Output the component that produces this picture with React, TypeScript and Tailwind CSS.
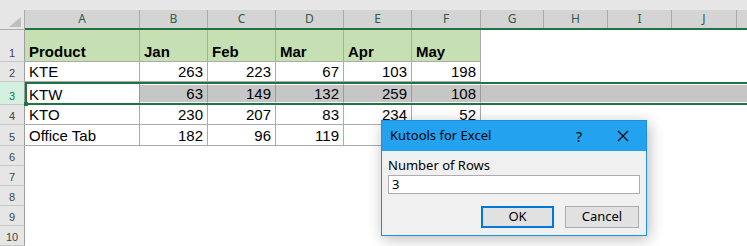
import React from "react";

const COLS = ["A", "B", "C", "D", "E", "F", "G", "H", "I", "J"];
const WCLS = [
  "w-[115px]",
  "w-[68px]",
  "w-[68px]",
  "w-[68px]",
  "w-[68px]",
  "w-[69px]",
  "w-[63px]",
  "w-[64px]",
  "w-[64px]",
  "w-[65px]",
];

type Cell = { t?: string; right?: boolean; bold?: boolean };

const DATA: Cell[][] = [
  [
    { t: "Product", bold: true },
    { t: "Jan", bold: true },
    { t: "Feb", bold: true },
    { t: "Mar", bold: true },
    { t: "Apr", bold: true },
    { t: "May", bold: true },
  ],
  [{ t: "KTE" }, { t: "263", right: true }, { t: "223", right: true }, { t: "67", right: true }, { t: "103", right: true }, { t: "198", right: true }],
  [{ t: "KTW" }, { t: "63", right: true }, { t: "149", right: true }, { t: "132", right: true }, { t: "259", right: true }, { t: "108", right: true }],
  [{ t: "KTO" }, { t: "230", right: true }, { t: "207", right: true }, { t: "83", right: true }, { t: "234", right: true }, { t: "52", right: true }],
  [{ t: "Office Tab" }, { t: "182", right: true }, { t: "96", right: true }, { t: "119", right: true }, {}, {}],
];

const ROW_H = ["h-[32px]", "h-[20px]", "h-[23px]", "h-[20px]", "h-[21px]", "h-[20px]", "h-[20px]", "h-[20px]", "h-[20px]", "h-[20px]"];

function RowHeader({ n, active, h }: { n: number; active?: boolean; h: string }) {
  return (
    <div
      className={`${h} w-[25px] shrink-0 flex items-end justify-center pb-[2px] border-r border-r-[#9E9E9E] border-b border-b-[#C8C8C8] text-[11px] leading-none ${
        active ? "bg-[#D3F0E0] text-[#217346]" : "bg-[#E6E6E6] text-[#444444]"
      }`}
    >
      {n}
    </div>
  );
}

function DataRow({ idx }: { idx: number }) {
  const row = DATA[idx];
  const h = ROW_H[idx];
  return (
    <div className="flex">
      <RowHeader n={idx + 1} h={h} />
      <div className="flex flex-1">
        {COLS.map((c, i) => {
          const cell = row ? row[i] : undefined;
          const inTable = row && i < 6;
          return (
            <div
              key={c}
              className={`${WCLS[i]} ${h} shrink-0 flex items-end pb-[2px] px-[4px] text-[15px] leading-none text-black whitespace-nowrap ${
                inTable ? "border-r border-b border-[#ABABAB]" : ""
              } ${idx === 0 && i < 6 ? "bg-[#C6E0B4]" : ""} ${cell?.right ? "justify-end" : "justify-start"} ${
                cell?.bold ? "font-bold" : ""
              }`}
            >
              {cell?.t}
            </div>
          );
        })}
        <div className={`flex-1 ${h}`} />
      </div>
    </div>
  );
}

function SelectedRow() {
  const row = DATA[2];
  return (
    <div className="flex">
      <RowHeader n={3} active h="h-[23px]" />
      <div className="relative flex flex-1 h-[23px] border-t-2 border-b-2 border-l-2 border-[#217346]">
        {COLS.map((c, i) => {
          const cell = row[i];
          const w = i === 0 ? "w-[113px]" : WCLS[i];
          return (
            <div
              key={c}
              className={`${w} h-full shrink-0 flex items-end pb-[1px] ${i === 0 ? "pl-[2px]" : "px-[4px]"} text-[15px] leading-none text-black whitespace-nowrap ${
                i === 0 ? "bg-white" : "bg-[#C6C6C6] border-y border-y-white"
              } ${i < 6 ? "border-r border-r-[#9A9A9A]" : ""} ${cell?.right ? "justify-end" : "justify-start"}`}
            >
              {cell?.t}
            </div>
          );
        })}
        <div className="flex-1 h-full bg-[#C6C6C6] border-y border-y-white" />
        <div className="absolute left-[-3px] bottom-[-3px] w-[4px] h-[4px] bg-[#217346]" />
      </div>
    </div>
  );
}

function Dialog() {
  return (
    <div className="absolute left-[381px] top-[120px] w-[266px] h-[116px] border border-[#1C8FDE] bg-[#F0F0F0] shadow-[2px_3px_14px_rgba(0,0,0,0.28)] flex flex-col font-['Noto_Sans',sans-serif] text-black">
      <div className="h-[30px] bg-[#22A2EF] flex items-center pl-[8px] pr-[17px] text-[13px]">
        <span className="flex-1">Kutools for Excel</span>
        <span className="text-[14px] mr-[35px]">?</span>
        <svg width="12" height="12" viewBox="0 0 12 12">
          <path d="M1 1 L11 11 M11 1 L1 11" stroke="#000" strokeWidth="1.1" fill="none" />
        </svg>
      </div>
      <div className="flex flex-col px-[6px] pt-[6px]">
        <div className="text-[13px] leading-[16px]">Number of Rows</div>
        <div className="mt-[2px] h-[19px] w-[252px] bg-white border border-[#ABADB3] flex items-center pl-[3px] text-[13px]">
          3
        </div>
        <div className="mt-[12px] flex justify-end gap-[11px] pr-[1px]">
          <button className="w-[73px] h-[22px] bg-[#E1E1E1] border-2 border-[#0078D7] text-[13px] flex items-center justify-center">
            OK
          </button>
          <button className="w-[74px] h-[22px] bg-[#E1E1E1] border border-[#ADADAD] text-[13px] flex items-center justify-center">
            Cancel
          </button>
        </div>
      </div>
    </div>
  );
}

export default function App() {
  return (
    <div className="relative w-[747px] h-[246px] overflow-hidden bg-white font-['Liberation_Sans',Arial,sans-serif]">
      <div className="h-[10px] bg-[#E6E6E6]" />
      <div className="flex h-[20px]">
        <div className="relative w-[25px] h-full shrink-0 bg-[#E6E6E6] border-r border-b border-[#ABABAB]">
          <svg className="absolute right-[3px] bottom-[2px]" width="12" height="10" viewBox="0 0 12 10">
            <polygon points="12,0 12,10 0,10" fill="#BEBEBE" />
          </svg>
        </div>
        <div className="flex flex-1 h-full bg-[#D4D4D4] border-b-2 border-[#217346]">
          {COLS.map((c, i) => (
            <div
              key={c}
              className={`${WCLS[i]} h-full shrink-0 flex items-center justify-center border-r border-[#ABABAB] text-[12px] text-[#2E5C4C] font-['Noto_Sans',sans-serif]`}
            >
              {c}
            </div>
          ))}
          <div className="flex-1" />
        </div>
      </div>
      <DataRow idx={0} />
      <DataRow idx={1} />
      <SelectedRow />
      <DataRow idx={3} />
      <DataRow idx={4} />
      <DataRow idx={5} />
      <DataRow idx={6} />
      <DataRow idx={7} />
      <DataRow idx={8} />
      <DataRow idx={9} />
      <Dialog />
    </div>
  );
}
